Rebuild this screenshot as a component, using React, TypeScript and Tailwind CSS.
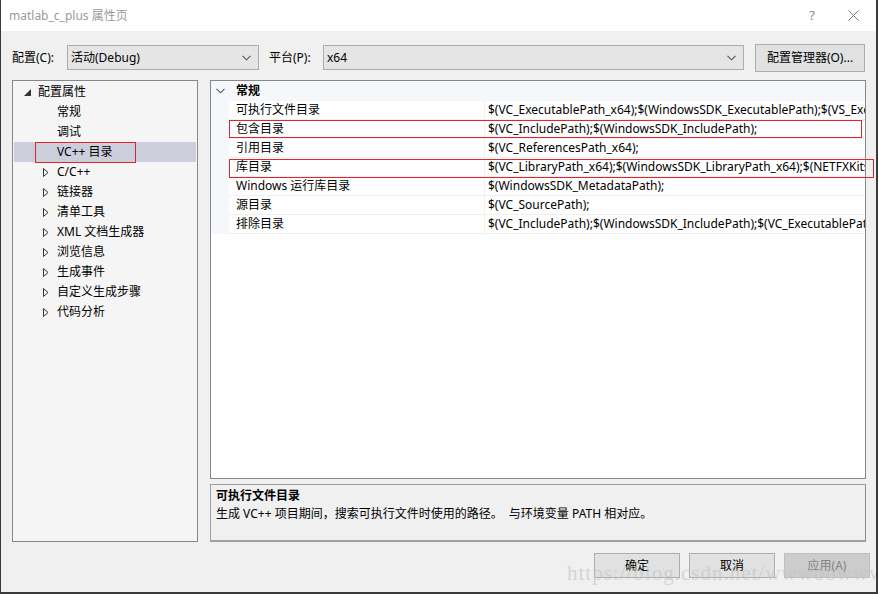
import React from 'react'

const FONT = { fontFamily: '"Noto Sans", "Noto Sans CJK SC", sans-serif' }

const treeItems = [
  { label: 'C/C++' },
  { label: '链接器' },
  { label: '清单工具' },
  { label: 'XML 文档生成器' },
  { label: '浏览信息' },
  { label: '生成事件' },
  { label: '自定义生成步骤' },
  { label: '代码分析' },
]

const rows = [
  ['可执行文件目录', '$(VC_ExecutablePath_x64);$(WindowsSDK_ExecutablePath);$(VS_ExecutablePath);$(MSBuild_ExecutablePath)'],
  ['包含目录', '$(VC_IncludePath);$(WindowsSDK_IncludePath);'],
  ['引用目录', '$(VC_ReferencesPath_x64);'],
  ['库目录', '$(VC_LibraryPath_x64);$(WindowsSDK_LibraryPath_x64);$(NETFXKitsDir)Lib\\um\\x64'],
  ['Windows 运行库目录', '$(WindowsSDK_MetadataPath);'],
  ['源目录', '$(VC_SourcePath);'],
  ['排除目录', '$(VC_IncludePath);$(WindowsSDK_IncludePath);$(VC_ExecutablePath_x64);$(VC_LibraryPath_x64)'],
]

function Chevron({ className = '' }: { className?: string }) {
  return (
    <svg width="9" height="6" viewBox="0 0 9 6" className={className}>
      <polyline points="0.5,0.8 4.5,4.8 8.5,0.8" fill="none" stroke="#555" strokeWidth="1.1" />
    </svg>
  )
}

function Expander() {
  return (
    <svg width="6" height="9" viewBox="0 0 6 9">
      <polygon points="0.5,0.5 5,4.5 0.5,8.5" fill="none" stroke="#333" strokeWidth="1" />
    </svg>
  )
}

function Select({ value, className }: { value: string; className: string }) {
  return (
    <div className={`h-[25px] bg-[#e5e5e5] border border-[#adadad] flex items-center justify-between pl-[3px] pr-[7px] ${className}`}>
      <span className="text-[12px] text-black">{value}</span>
      <Chevron />
    </div>
  )
}

function Button({ label, disabled }: { label: string; disabled?: boolean }) {
  return (
    <div
      className={`w-[86px] h-[25px] flex items-center justify-center text-[12px] border ${
        disabled ? 'bg-[#cccccc] border-[#bfbfbf] text-[#838383]' : 'bg-[#e1e1e1] border-[#adadad] text-black'
      }`}
    >
      {label}
    </div>
  )
}

export default function App() {
  return (
    <div style={FONT} className="w-[878px] h-[594px] flex flex-col border-l border-r-2 border-b-2 border-[#3a3a3a] bg-[#f0f0f0] relative overflow-hidden">
      {/* title bar */}
      <div className="h-[31px] bg-white flex items-center shrink-0">
        <span className="ml-[8px] text-[12px] text-[#9a9a9a]">matlab_c_plus 属性页</span>
        <span className="ml-auto text-[13px] text-[#888] mr-[33px]">?</span>
        <svg width="11" height="11" viewBox="0 0 11 11" className="mr-[17px]">
          <path d="M0.5 0.5 L10.5 10.5 M10.5 0.5 L0.5 10.5" stroke="#777" strokeWidth="1" />
        </svg>
      </div>

      {/* config row */}
      <div className="flex items-center h-[27px] mt-[13px] pl-[11px]">
        <span className="text-[12px] text-black w-[55px]">配置(C):</span>
        <Select value="活动(Debug)" className="w-[192px]" />
        <span className="text-[12px] text-black ml-[10px] w-[54px]">平台(P):</span>
        <Select value="x64" className="w-[421px]" />
        <div className="ml-[11px] w-[110px] h-[28px] bg-[#e1e1e1] border border-[#adadad] flex items-center justify-center text-[12px] text-black">
          配置管理器(O)...
        </div>
      </div>

      {/* main */}
      <div className="flex mt-[9px] pl-[11px] h-[462px]">
        {/* tree */}
        <div className="w-[186px] bg-[#f5f5f5] border border-[#828790] pt-px text-[12px] text-black relative">
          <div className="h-[20px] flex items-center">
            <svg width="7" height="7" viewBox="0 0 7 7" className="ml-[11px]">
              <polygon points="7,0 7,7 0,7" fill="#333" />
            </svg>
            <span className="ml-[7px]">配置属性</span>
          </div>
          <div className="h-[20px] flex items-center pl-[44px]">常规</div>
          <div className="h-[20px] flex items-center pl-[44px]">调试</div>
          <div className="h-[20px] flex items-center pl-[44px] bg-[#cccedb] mx-px relative">
            <span className="-ml-px">VC++ 目录</span>
            <div className="absolute left-[21px] top-0 w-[101px] h-[21px] border border-[#e0242a]" />
          </div>
          {treeItems.map((it) => (
            <div key={it.label} className="h-[20px] flex items-center">
              <span className="ml-[30px] w-[14px] flex items-center">
                <Expander />
              </span>
              <span>{it.label}</span>
            </div>
          ))}
        </div>

        {/* right column */}
        <div className="ml-[12px] w-[656px] flex flex-col">
          <div className="h-[399px] bg-white border border-[#828790] text-[12px] text-black relative">
            <div className="h-[20px] bg-[#f5f7fa] flex items-center">
              <span className="ml-[5px] w-[20px] flex items-center">
                <Chevron />
              </span>
              <span className="font-bold">常规</span>
            </div>
            {rows.map(([name, value]) => (
              <div key={name} className="h-[19px] flex">
                <div className="w-[18px] bg-[#f5f7fa] shrink-0" />
                <div className="w-[256px] shrink-0 border-b border-[#f0f0f0] border-r flex items-center pl-[7px] whitespace-nowrap">
                  {name}
                </div>
                <div className="flex-1 min-w-0 border-b border-[#f0f0f0] flex items-center pl-[3px] whitespace-nowrap overflow-hidden">
                  {value}
                </div>
              </div>
            ))}
            {/* red annotation boxes */}
            <div className="absolute left-[18px] top-[39px] w-[633px] h-[18px] border border-[#e0242a]" />
            <div className="absolute left-[18px] top-[78px] w-[645px] h-[19px] border border-[#e0242a]" />
          </div>

          <div className="mt-[5px] h-[58px] bg-[#f0f0f0] border border-[#a0a0a0] border-r-[#8a8a8a] border-b-2 border-b-[#a0a0a0] px-[5px] pt-[2px] text-[12px] text-black">
            <div className="font-bold leading-[18px]">可执行文件目录</div>
            <div className="leading-[18px] whitespace-pre">生成 VC++ 项目期间，搜索可执行文件时使用的路径。  与环境变量 PATH 相对应。</div>
          </div>
        </div>
      </div>

      {/* buttons */}
      <div className="flex justify-end gap-[9px] mt-[11px] pr-[6px]">
        <Button label="确定" />
        <Button label="取消" />
        <Button label="应用(A)" disabled />
      </div>

      {/* watermark */}
      <div
        className="absolute left-[566px] top-[558px] text-[21px] text-[#c4c4c4] opacity-60 tracking-[1px] whitespace-nowrap pointer-events-none"
        style={{ fontFamily: '"Liberation Serif", serif' }}
      >
        https://blog.csdn.net/wwwoowww
      </div>
    </div>
  )
}
